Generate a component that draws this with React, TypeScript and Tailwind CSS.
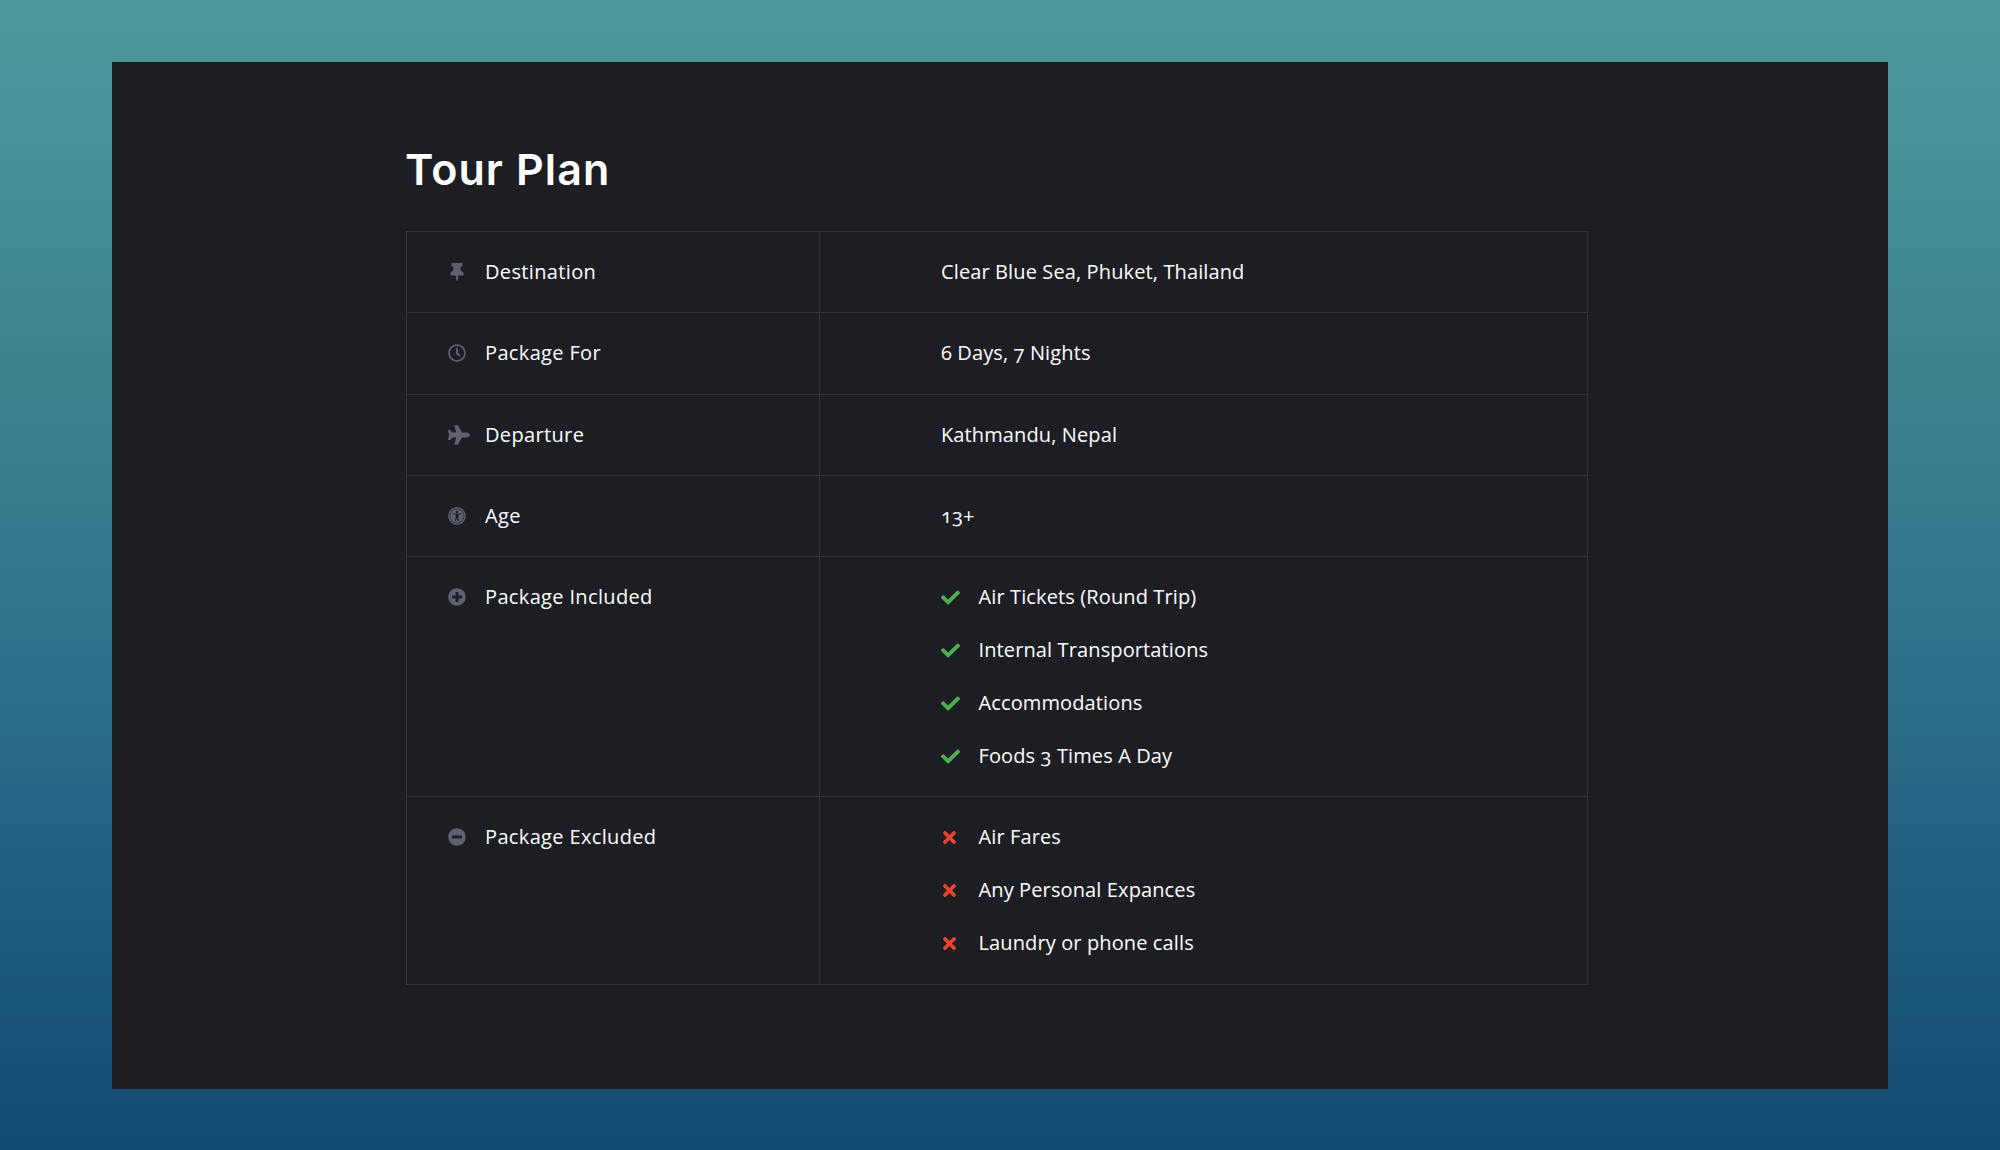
import React from 'react'
import { FaThumbtack, FaRegClock, FaPlane, FaUniversalAccess, FaPlusCircle, FaMinusCircle, FaCheck, FaTimes } from 'react-icons/fa'

const included = ['Air Tickets (Round Trip)', 'Internal Transportations', 'Accommodations', 'Foods 3 Times A Day']
const excluded = ['Air Fares', 'Any Personal Expances', 'Laundry or phone calls']

function Row({ icon, label, children, last }: { icon: React.ReactNode; label: string; children: React.ReactNode; last?: boolean }) {
  return (
    <div className={`flex ${last ? '' : 'border-b border-[#33353b]'}`}>
      <div className="flex w-[413px] shrink-0 items-start border-r border-[#33353b] py-[25px] pl-[41px] leading-[30.25px]">
        <span className="flex h-[30.25px] w-[37px] shrink-0 items-center text-[#5e626e]">{icon}</span>
        <span className="text-[20px] tracking-[0.35px] text-white">{label}</span>
      </div>
      <div className="flex-1 py-[25px] pl-[121px] text-[20px] leading-[30.25px] text-white">{children}</div>
    </div>
  )
}

function ListValue({ items, icon }: { items: string[]; icon: React.ReactNode }) {
  return (
    <ul className="flex flex-col gap-[22.75px]">
      {items.map((item) => (
        <li key={item} className="flex items-center">
          <span className="flex w-[37.5px] shrink-0 items-center">{icon}</span>
          {item}
        </li>
      ))}
    </ul>
  )
}

export default function App() {
  return (
    <div className="h-[1150px] bg-[linear-gradient(180deg,#4c9b9b_0%,#33778d_50%,#134a74_100%)] px-[112px] pt-[62px] font-['Open_Sans',sans-serif] font-medium tracking-[0.12px] [font-variant-numeric:oldstyle-nums]">
      <div className="h-[1027px] bg-[#1d1e24] pl-[294px] pr-[300px] pt-[80px]">
        <h2 className="mb-[35px] -ml-[1px] font-['Inter',sans-serif] text-[43px] font-semibold leading-[54px] tracking-[1.1px] text-white">Tour Plan</h2>
        <div className="border border-[#33353b]">
          <Row icon={<FaThumbtack size={18} />} label="Destination">Clear Blue Sea, Phuket, Thailand</Row>
          <Row icon={<FaRegClock size={18} />} label="Package For">6 Days, 7 Nights</Row>
          <Row icon={<FaPlane size={22} />} label="Departure">Kathmandu, Nepal</Row>
          <Row icon={<FaUniversalAccess size={18} />} label="Age">13+</Row>
          <Row icon={<FaPlusCircle size={18} />} label="Package Included">
            <ListValue items={included} icon={<FaCheck size={19} className="text-[#4caf50]" />} />
          </Row>
          <Row icon={<FaMinusCircle size={18} />} label="Package Excluded" last>
            <ListValue items={excluded} icon={<FaTimes size={19} className="-ml-[1px] text-[#f0452a]" />} />
          </Row>
        </div>
      </div>
    </div>
  )
}
